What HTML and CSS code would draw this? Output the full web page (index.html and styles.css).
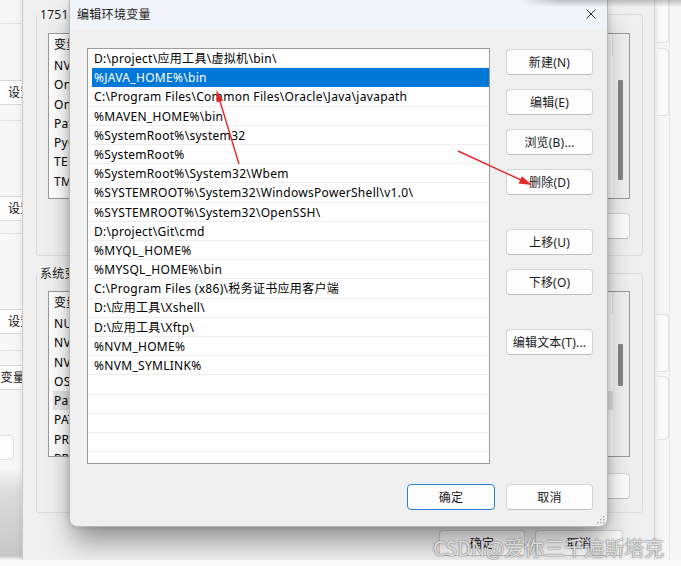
FILE: index.html
```html
<!DOCTYPE html>
<html lang="zh-CN">
<head>
<meta charset="utf-8">
<title>编辑环境变量</title>
<link rel="stylesheet" href="styles.css">
</head>
<body>
<div class="desk">

  <div class="far-left">
    <div class="fl-line fl-l1"></div>
    <div class="fl-btn fl-b1">设置(S)...</div>
    <div class="fl-line fl-l2"></div>
    <div class="fl-btn fl-b2">设置(S)...</div>
    <div class="fl-line fl-l3"></div>
    <div class="fl-btn fl-b3">设置(T)...</div>
    <div class="fl-line fl-l4"></div>
    <div class="fl-btn fl-b4">环境变量(N)...</div>
    <div class="fl-box"></div>
  </div>

  <div class="far-right">
    <div class="fr-col">
      <div class="fr-box fr-x1"></div>
      <div class="fr-box fr-x2"></div>
      <div class="fr-box fr-x3"></div>
      <div class="fr-box fr-x4"></div>
    </div>
  </div>

  <div class="env">
    <div class="group g1">
      <div class="group-label">17515 的用户变量(U)</div>
      <div class="listview lv1">
        <div class="lv-main">
          <div class="lv-head">变量</div>
          <div class="lv-row">NVM_HOME</div>
          <div class="lv-row">OneDrive</div>
          <div class="lv-row">OneDriveConsumer</div>
          <div class="lv-row">Path</div>
          <div class="lv-row">PyCharm Community Edition</div>
          <div class="lv-row">TEMP</div>
          <div class="lv-row">TMP</div>
        </div>
        <div class="lv-scroll"><div class="thumb thumb1"></div></div>
      </div>
      <div class="btn-row">
        <div class="btn env-btn">新建(N)...</div>
        <div class="btn env-btn">编辑(E)...</div>
        <div class="btn env-btn">删除(D)</div>
      </div>
    </div>

    <div class="group g2">
      <div class="group-label">系统变量(S)</div>
      <div class="listview lv2">
        <div class="lv-main">
          <div class="lv-head">变量</div>
          <div class="lv-row">NUMBER_OF_PROCESSORS</div>
          <div class="lv-row">NVM_HOME</div>
          <div class="lv-row">NVM_SYMLINK</div>
          <div class="lv-row">OS</div>
          <div class="lv-row lv-hot">Path</div>
          <div class="lv-row">PATHEXT</div>
          <div class="lv-row">PROCESSOR_ARCHITECTURE</div>
          <div class="lv-row">PROCESSOR_IDENTIFIER</div>
        </div>
        <div class="lv-scroll"><div class="thumb thumb2"></div></div>
      </div>
      <div class="btn-row btn-row2">
        <div class="btn env-btn">新建(W)...</div>
        <div class="btn env-btn">编辑(I)...</div>
        <div class="btn env-btn">删除(L)</div>
      </div>
    </div>

    <div class="env-foot">
      <div class="btn env-ok">确定</div>
      <div class="btn env-cancel">取消</div>
    </div>
  </div>

  <div class="dialog">
    <div class="titlebar">
      <span class="title">编辑环境变量</span>
      <svg class="close" width="10" height="10" viewBox="0 0 10 10"><path d="M0.5 0.5 L9.5 9.5 M9.5 0.5 L0.5 9.5" stroke="#2b2b2b" stroke-width="1" fill="none"/></svg>
    </div>
    <div class="dlg-body">
      <div class="pathlist">
        <div class="row">D:\project\应用工具\虚拟机\bin\</div>
        <div class="row sel">%JAVA_HOME%\bin</div>
        <div class="row">C:\Program Files\Common Files\Oracle\Java\javapath</div>
        <div class="row">%MAVEN_HOME%\bin</div>
        <div class="row">%SystemRoot%\system32</div>
        <div class="row">%SystemRoot%</div>
        <div class="row">%SystemRoot%\System32\Wbem</div>
        <div class="row">%SYSTEMROOT%\System32\WindowsPowerShell\v1.0\</div>
        <div class="row">%SYSTEMROOT%\System32\OpenSSH\</div>
        <div class="row">D:\project\Git\cmd</div>
        <div class="row">%MYQL_HOME%</div>
        <div class="row">%MYSQL_HOME%\bin</div>
        <div class="row">C:\Program Files (x86)\税务证书应用客户端</div>
        <div class="row">D:\应用工具\Xshell\</div>
        <div class="row">D:\应用工具\Xftp\</div>
        <div class="row">%NVM_HOME%</div>
        <div class="row">%NVM_SYMLINK%</div>
      </div>
      <div class="side">
        <div class="btn side-btn">新建(N)</div>
        <div class="btn side-btn gap">编辑(E)</div>
        <div class="btn side-btn gap">浏览(B)...</div>
        <div class="btn side-btn gap">删除(D)</div>
        <div class="btn side-btn gap-big">上移(U)</div>
        <div class="btn side-btn gap">下移(O)</div>
        <div class="btn side-btn gap-big">编辑文本(T)...</div>
      </div>
    </div>
    <div class="dlg-foot">
      <div class="btn ok">确定</div>
      <div class="btn cancel">取消</div>
    </div>
    <svg class="grip" width="9" height="9" viewBox="0 0 9 9">
      <rect x="7" y="1" width="1.4" height="1.4" fill="#a8a8a8"/>
      <rect x="4" y="4" width="1.4" height="1.4" fill="#a8a8a8"/>
      <rect x="7" y="4" width="1.4" height="1.4" fill="#a8a8a8"/>
      <rect x="1" y="7" width="1.4" height="1.4" fill="#a8a8a8"/>
      <rect x="4" y="7" width="1.4" height="1.4" fill="#a8a8a8"/>
      <rect x="7" y="7" width="1.4" height="1.4" fill="#a8a8a8"/>
    </svg>
  </div>

  <svg class="marks" width="681" height="566" viewBox="0 0 681 566">
    <line x1="239" y1="164" x2="219.6" y2="100" stroke="#e4262d" stroke-width="1.4"/>
    <polygon points="216.5,90 223.2,100.6 216.8,102.4" fill="#e4262d"/>
    <line x1="458" y1="151" x2="521" y2="180" stroke="#e4262d" stroke-width="1.4"/>
    <polygon points="532,185 518.6,183.4 521.9,176.2" fill="#e4262d"/>
  </svg>

  <div class="watermark">CSDN@爱你三千遍斯塔克</div>
  <div class="topshade"></div>
  <div class="bottomstrip"></div>
</div>
</body>
</html>
```

FILE: styles.css
```css
* { box-sizing: border-box; }
html, body { margin: 0; padding: 0; }
body {
  width: 681px;
  height: 566px;
  overflow: hidden;
  background: #f8f8f8;
  font-family: "Noto Sans", "Noto Sans CJK SC", sans-serif;
  font-size: 12px;
  color: #000;
}
.desk {
  position: relative;
  width: 681px;
  height: 566px;
  overflow: hidden;
  background: linear-gradient(to bottom, #f5f5f5 0, #f5f5f5 470px, #dcdcdc 492px, #c7c7c7 556px, #f9f9f9 560px);
}

/* far-left window (system properties) */
.far-left {
  position: absolute;
  left: 0;
  top: 0;
  width: 40px;
  height: 470px;
  background: #f7f7f7;
  overflow: hidden;
  display: flex;
  flex-direction: column;
}
.fl-line { flex: none; height: 1px; background: #e2e2e2; }
.fl-l1 { margin-top: 23px; }
.fl-l2 { margin-top: 15px; }
.fl-l3 { margin-top: 12px; }
.fl-l4 { margin-top: 16px; }
.fl-btn {
  flex: none;
  height: 25px;
  width: 80px;
  margin-left: -30px;
  padding-left: 37px;
  line-height: 23px;
  white-space: nowrap;
  background: #fdfdfd;
  border: 1px solid #d8d8d8;
  border-radius: 4px;
  letter-spacing: 0.3px;
  color: #111;
}
.fl-b1 { margin-top: 56px; }
.fl-b2 { margin-top: 75px; }
.fl-b3 { margin-top: 75px; }
.fl-b4 { margin-top: 14px; padding-left: 5px; }
.fl-box {
  flex: none;
  margin-top: 45px;
  margin-left: -20px;
  width: 34px;
  height: 25px;
  background: #fdfdfd;
  border: 1px solid #dedede;
  border-radius: 4px;
}

/* far-right window strip */
.far-right {
  position: absolute;
  left: 655px;
  top: 0;
  width: 26px;
  height: 560px;
  background: #f6f6f6;
  display: flex;
}
.fr-col {
  width: 15px;
  border-right: 1px solid #e6e6e6;
  padding-left: 2px;
  display: flex;
  flex-direction: column;
}
.fr-box {
  flex: none;
  width: 12px;
  background: #fafafa;
  border: 1px solid #e2e2e2;
  border-left: none;
  border-radius: 0 4px 4px 0;
}
.fr-x1 { margin-top: -6px; height: 49px; }
.fr-x2 { margin-top: 5px; height: 68px; }
.fr-x3 { margin-top: 198px; height: 58px; }
.fr-x4 { margin-top: 4px; height: 64px; }

/* middle window: environment variables */
.env {
  position: absolute;
  left: 22px;
  top: -20px;
  width: 633px;
  height: 580px;
  background: #f0f0f0;
  border-left: 1px solid #c9c9c9;
  border-right: 1px solid #d6d6d6;
  padding: 34px 0 0 13px;
  box-shadow: 0 0 8px rgba(0, 0, 0, 0.10);
}
.group {
  width: 607px;
  border: 1px solid #dcdcdc;
  border-radius: 3px;
  padding: 0 12px 0 11px;
  display: flex;
  flex-direction: column;
}
.g1 { height: 242px; }
.g2 { height: 240px; margin-top: 17px; }
.group-label {
  align-self: flex-start;
  margin: -8px 0 0 -10px;
  padding: 0 2px;
  height: 16px;
  line-height: 16px;
  background: #f0f0f0;
  white-space: nowrap;
  letter-spacing: 0.3px;
  color: #1a1a1a;
}
.listview {
  flex: none;
  height: 166px;
  margin-top: 10px;
  border: 1px solid #9a9a9a;
  background: #fff;
  display: flex;
}
.lv2 { margin-top: 9px; }
.lv-main {
  flex: 1;
  overflow: hidden;
}
.lv-head {
  height: 22px;
  line-height: 22px;
  padding-left: 5px;
  border-right: 1px solid #e3e3e3;
  letter-spacing: 0.3px;
}
.lv-row {
  height: 19.3px;
  line-height: 19.3px;
  padding-left: 5px;
  white-space: nowrap;
  letter-spacing: 0.3px;
}
.lv-hot {
  background: #e5e5e5;
  margin-left: 4px;
  padding-left: 1px;
}
.lv-scroll {
  flex: none;
  width: 16px;
  background: #f0f0f0;
  padding-left: 5px;
}
.thumb {
  width: 5px;
  background: #858585;
  border-radius: 1px;
}
.thumb1 { margin-top: 46px; height: 100px; }
.thumb2 { margin-top: 52px; height: 42px; }
.btn-row {
  display: flex;
  justify-content: flex-end;
  gap: 10px;
  margin-top: 14px;
}
.btn-row2 { margin-top: 16px; }
.env-btn { width: 87px; }
.env-foot {
  display: flex;
  justify-content: flex-end;
  gap: 10px;
  margin-top: 17px;
  padding-right: 31px;
}
.env-ok { width: 86px; }
.env-cancel { width: 88px; }

/* buttons */
.btn {
  flex: none;
  height: 26px;
  display: flex;
  align-items: center;
  justify-content: center;
  background: #fdfdfd;
  border: 1px solid #d3d3d3;
  border-bottom-color: #c0c0c0;
  border-radius: 4px;
  color: #1a1a1a;
  letter-spacing: 0.2px;
  white-space: nowrap;
}

/* front dialog */
.dialog {
  position: absolute;
  left: 69px;
  top: -1px;
  width: 539px;
  background: #f0f0f0;
  border: 1px solid #b8b8b8;
  border-radius: 0 0 8px 8px;
  box-shadow: 0 18px 28px -4px rgba(0, 0, 0, 0.40), 0 0 7px rgba(0, 0, 0, 0.16);
  display: flex;
  flex-direction: column;
}
.titlebar {
  height: 29px;
  display: flex;
  align-items: center;
  justify-content: space-between;
  padding: 0 11px 1px 7px;
  background: #f1f4f9;
  color: #1b1b1b;
}
.title { letter-spacing: 0.3px; }
.close { display: block; }
.dlg-body {
  display: flex;
  gap: 16px;
  padding: 19px 14px 0 17px;
}
.pathlist {
  flex: none;
  width: 403px;
  height: 416px;
  border: 1px solid #9c9c9c;
  background: repeating-linear-gradient(to bottom, #ffffff 0, #ffffff 18.2px, #eeeeee 18.2px, #eeeeee 19.2px);
  overflow: hidden;
}
.row {
  height: 19.2px;
  line-height: 19.2px;
  margin-left: 4px;
  padding-left: 2px;
  white-space: nowrap;
  overflow: hidden;
  letter-spacing: 0.3px;
  color: #000;
}
.row.sel {
  background: #0078d7;
  color: #fff;
}
.side {
  flex: none;
  width: 87px;
  display: flex;
  flex-direction: column;
  padding-top: 1px;
}
.side-btn { width: 87px; }
.side-btn.gap { margin-top: 14px; }
.side-btn.gap-big { margin-top: 34px; }
.dlg-foot {
  display: flex;
  justify-content: flex-end;
  gap: 11px;
  padding: 20px 14px 16px;
}
.ok {
  width: 88px;
  border: 1px solid #2a80d6;
}
.cancel { width: 87px; }
.grip {
  position: absolute;
  right: 2px;
  bottom: 2px;
}

/* annotation overlays */
.marks {
  position: absolute;
  left: 0;
  top: 0;
  pointer-events: none;
}
.watermark {
  position: absolute;
  left: 433px;
  top: 536px;
  font-family: "Noto Sans CJK SC", sans-serif;
  font-size: 20px;
  line-height: 24px;
  white-space: nowrap;
  color: rgba(255, 255, 255, 0.8);
  text-shadow: 0 0 1px rgba(70, 70, 70, 0.9), 0 0 2px rgba(70, 70, 70, 0.45);
}
.topshade {
  position: absolute;
  left: 520px;
  top: 0;
  width: 161px;
  height: 7px;
  background: linear-gradient(to bottom, rgba(0, 0, 0, 0.22), rgba(0, 0, 0, 0));
  -webkit-mask-image: linear-gradient(to right, transparent, #000 40px);
  mask-image: linear-gradient(to right, transparent, #000 40px);
}
.bottomstrip {
  position: absolute;
  left: 0;
  bottom: 0;
  width: 681px;
  height: 6px;
  background: #f9f9f9;
}
```
